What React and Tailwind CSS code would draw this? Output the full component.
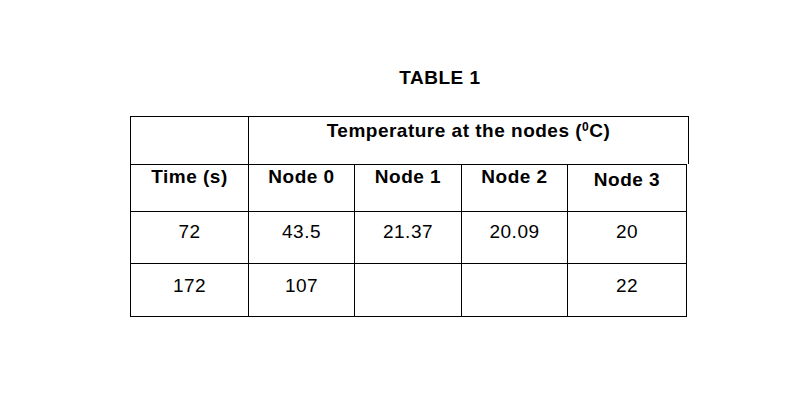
import React from 'react';

const font = { fontFamily: '"Liberation Sans", Arial, sans-serif' };

const cols = ['w-[118px]', 'w-[106px]', 'w-[107px]', 'w-[106px]', 'w-[120px] border-r'];

const rows = [
  { h: 'h-[52px] pt-[9px]', cells: ['72', '43.5', '21.37', '20.09', '20'] },
  { h: 'h-[54px] pt-[11px] border-b', cells: ['172', '107', '', '', '22'] },
];

const App = () => {
  return (
    <div className="w-[790px] h-[417px] bg-white text-black pt-[67px] tracking-[0.5px]" style={font}>
      {/* Title */}
      <div className="pl-[90px] text-center text-[19px] leading-[22px] font-bold">TABLE 1</div>

      {/* Table */}
      <div className="ml-[130px] mt-[27px] text-[19px] leading-[22px]">
        <div className="flex">
          <div className="w-[118px] h-[48px] border-l border-t border-black" />
          <div className="w-[441px] h-[48px] border-l border-t border-r border-black pt-[3px] text-center font-bold">
            Temperature at the nodes (<sup className="text-[12px]">0</sup>C)
          </div>
        </div>

        <div className="flex font-bold">
          {['Time (s)', 'Node 0', 'Node 1', 'Node 2', 'Node 3'].map((t, i) => (
            <div
              key={t}
              className={`${cols[i]} h-[47px] border-l border-t border-black text-center ${i === 4 ? 'pt-[4px]' : 'pt-[1px]'}`}
            >
              {t}
            </div>
          ))}
        </div>

        {rows.map((r, ri) => (
          <div key={ri} className="flex">
            {r.cells.map((c, i) => (
              <div key={i} className={`${cols[i]} ${r.h} border-l border-t border-black text-center`}>
                {c}
              </div>
            ))}
          </div>
        ))}
      </div>
    </div>
  );
};

export default App;
